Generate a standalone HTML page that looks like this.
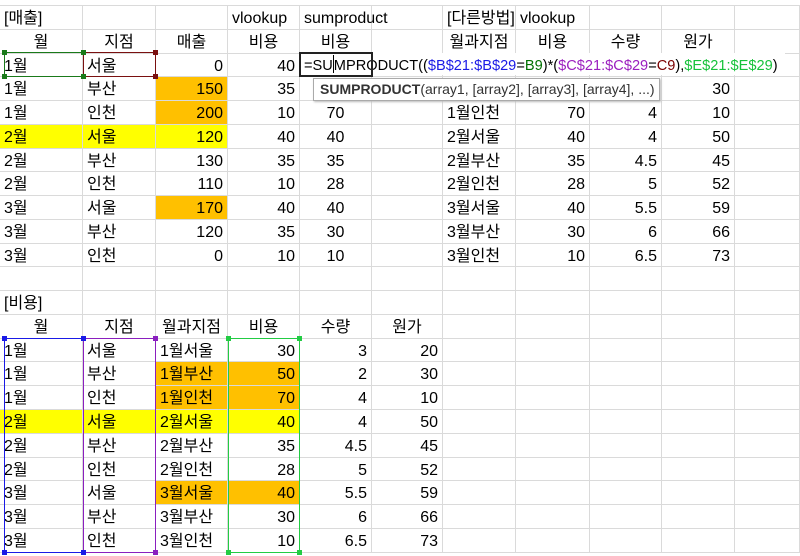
<!DOCTYPE html><html><head><meta charset="utf-8"><style>
*{margin:0;padding:0;box-sizing:border-box}
body{width:800px;height:556px;overflow:hidden;background:#fff;position:relative;font-family:"Liberation Sans","Noto Sans CJK KR",sans-serif;font-size:16px;color:#000}
#g{position:absolute;left:0;top:5px;width:800px;border-top:1px solid #dadada}
.r{display:flex;height:23.78px;border-bottom:1px solid #dadada}
.r>div{flex:none;border-right:1px solid #dadada;padding:1px 4px 0;line-height:23px;white-space:nowrap;overflow:visible}
.r>div:nth-child(1){width:83px}.r>div:nth-child(2){width:73px}.r>div:nth-child(3){width:72px}
.r>div:nth-child(4){width:72px}.r>div:nth-child(5){width:72px}.r>div:nth-child(6){width:71px}
.r>div:nth-child(7){width:73px}.r>div:nth-child(8){width:74px}.r>div:nth-child(9){width:72px}
.r>div:nth-child(10){width:73px}.r>div:nth-child(11){width:65px}
.c{text-align:center}.n{text-align:right}
.o{background:#ffc000}.y{background:#ffff00}
.bx{position:absolute;border:1px solid}
.h{position:absolute;width:5px;height:5px}
</style></head><body>
<div id="g">
<div class="r"><div>[매출]</div><div></div><div></div><div>vlookup</div><div>sumproduct</div><div></div><div>[다른방법]</div><div>vlookup</div><div></div><div></div><div></div></div>
<div class="r"><div class="c">월</div><div class="c">지점</div><div class="c">매출</div><div class="c">비용</div><div class="c">비용</div><div></div><div class="c">월과지점</div><div class="c">비용</div><div class="c">수량</div><div class="c">원가</div><div></div></div>
<div class="r"><div>1월</div><div>서울</div><div class="n">0</div><div class="n">40</div><div></div><div></div><div></div><div></div><div></div><div></div><div></div></div>
<div class="r"><div>1월</div><div>부산</div><div class="n o">150</div><div class="n">35</div><div></div><div></div><div></div><div></div><div></div><div class="n">30</div><div></div></div>
<div class="r"><div>1월</div><div>인천</div><div class="n o">200</div><div class="n">10</div><div class="c">70</div><div></div><div>1월인천</div><div class="n">70</div><div class="n">4</div><div class="n">10</div><div></div></div>
<div class="r"><div class="y">2월</div><div class="y">서울</div><div class="n y">120</div><div class="n">40</div><div class="c">40</div><div></div><div>2월서울</div><div class="n">40</div><div class="n">4</div><div class="n">50</div><div></div></div>
<div class="r"><div>2월</div><div>부산</div><div class="n">130</div><div class="n">35</div><div class="c">35</div><div></div><div>2월부산</div><div class="n">35</div><div class="n">4.5</div><div class="n">45</div><div></div></div>
<div class="r"><div>2월</div><div>인천</div><div class="n">110</div><div class="n">10</div><div class="c">28</div><div></div><div>2월인천</div><div class="n">28</div><div class="n">5</div><div class="n">52</div><div></div></div>
<div class="r"><div>3월</div><div>서울</div><div class="n o">170</div><div class="n">40</div><div class="c">40</div><div></div><div>3월서울</div><div class="n">40</div><div class="n">5.5</div><div class="n">59</div><div></div></div>
<div class="r"><div>3월</div><div>부산</div><div class="n">120</div><div class="n">35</div><div class="c">30</div><div></div><div>3월부산</div><div class="n">30</div><div class="n">6</div><div class="n">66</div><div></div></div>
<div class="r"><div>3월</div><div>인천</div><div class="n">0</div><div class="n">10</div><div class="c">10</div><div></div><div>3월인천</div><div class="n">10</div><div class="n">6.5</div><div class="n">73</div><div></div></div>
<div class="r"><div></div><div></div><div></div><div></div><div></div><div></div><div></div><div></div><div></div><div></div><div></div></div>
<div class="r"><div>[비용]</div><div></div><div></div><div></div><div></div><div></div><div></div><div></div><div></div><div></div><div></div></div>
<div class="r"><div class="c">월</div><div class="c">지점</div><div class="c">월과지점</div><div class="c">비용</div><div class="c">수량</div><div class="c">원가</div><div></div><div></div><div></div><div></div><div></div></div>
<div class="r"><div>1월</div><div>서울</div><div>1월서울</div><div class="n">30</div><div class="n">3</div><div class="n">20</div><div></div><div></div><div></div><div></div><div></div></div>
<div class="r"><div>1월</div><div>부산</div><div class="o">1월부산</div><div class="n o">50</div><div class="n">2</div><div class="n">30</div><div></div><div></div><div></div><div></div><div></div></div>
<div class="r"><div>1월</div><div>인천</div><div class="o">1월인천</div><div class="n o">70</div><div class="n">4</div><div class="n">10</div><div></div><div></div><div></div><div></div><div></div></div>
<div class="r"><div class="y">2월</div><div class="y">서울</div><div class="y">2월서울</div><div class="n y">40</div><div class="n">4</div><div class="n">50</div><div></div><div></div><div></div><div></div><div></div></div>
<div class="r"><div>2월</div><div>부산</div><div>2월부산</div><div class="n">35</div><div class="n">4.5</div><div class="n">45</div><div></div><div></div><div></div><div></div><div></div></div>
<div class="r"><div>2월</div><div>인천</div><div>2월인천</div><div class="n">28</div><div class="n">5</div><div class="n">52</div><div></div><div></div><div></div><div></div><div></div></div>
<div class="r"><div>3월</div><div>서울</div><div class="o">3월서울</div><div class="n o">40</div><div class="n">5.5</div><div class="n">59</div><div></div><div></div><div></div><div></div><div></div></div>
<div class="r"><div>3월</div><div>부산</div><div>3월부산</div><div class="n">30</div><div class="n">6</div><div class="n">66</div><div></div><div></div><div></div><div></div><div></div></div>
<div class="r"><div>3월</div><div>인천</div><div>3월인천</div><div class="n">10</div><div class="n">6.5</div><div class="n">73</div><div></div><div></div><div></div><div></div><div></div></div>
</div>
<div style="position:absolute;left:301px;top:53px;width:484px;height:22px;background:#fff"></div>
<div style="position:absolute;left:304px;top:54px;line-height:21px;white-space:nowrap;font-size:14.6px;padding-top:1px">=SU<span style="display:inline-block;width:1px;height:18px;background:#000;vertical-align:-3px"></span>MPRODUCT((<span style="color:#1a1ae6">$B$21:$B$29</span>=<span style="color:#007000">B9</span>)*(<span style="color:#9b1fbf">$C$21:$C$29</span>=<span style="color:#7a0000">C9</span>),<span style="color:#16c23a">$E$21:$E$29</span>)</div>
<div class="bx" style="left:299px;top:52px;width:74px;height:25px;border:2px solid #222"></div>
<div style="position:absolute;left:313px;top:78px;width:347px;height:23px;background:#fff;border:1px solid #aaa;box-shadow:1px 1px 2px #bbb;font-size:14px;line-height:21px;padding-left:6px;white-space:nowrap;color:#333"><b>SUMPRODUCT</b>(array1, [array2], [array3], [array4], ...)</div>
<div class="bx" style="left:4px;top:52px;width:80px;height:25px;border-color:#1a7a1a"></div>
<div class="bx" style="left:83px;top:52px;width:73px;height:25px;border-color:#7a1010"></div>
<div class="h" style="left:2px;top:50px;background:#1a7a1a"></div><div class="h" style="left:81px;top:50px;background:#1a7a1a"></div><div class="h" style="left:2px;top:74px;background:#1a7a1a"></div><div class="h" style="left:81px;top:74px;background:#1a7a1a"></div>
<div class="h" style="left:153px;top:50px;background:#7a1010"></div><div class="h" style="left:153px;top:74px;background:#7a1010"></div>
<div class="bx" style="left:4px;top:338px;width:80px;height:215px;border-color:#1a1ae6"></div>
<div class="bx" style="left:83px;top:338px;width:73px;height:215px;border-color:#8a1fbf"></div>
<div class="bx" style="left:228px;top:338px;width:72px;height:215px;border-color:#22cc44"></div>
<div class="h" style="left:2px;top:336px;background:#1a1ae6"></div><div class="h" style="left:81px;top:336px;background:#1a1ae6"></div><div class="h" style="left:2px;top:550px;background:#1a1ae6"></div><div class="h" style="left:81px;top:550px;background:#1a1ae6"></div>
<div class="h" style="left:153px;top:336px;background:#8a1fbf"></div><div class="h" style="left:153px;top:550px;background:#8a1fbf"></div>
<div class="h" style="left:226px;top:336px;background:#22cc44"></div><div class="h" style="left:297px;top:336px;background:#22cc44"></div><div class="h" style="left:226px;top:550px;background:#22cc44"></div><div class="h" style="left:297px;top:550px;background:#22cc44"></div>
</body></html>
